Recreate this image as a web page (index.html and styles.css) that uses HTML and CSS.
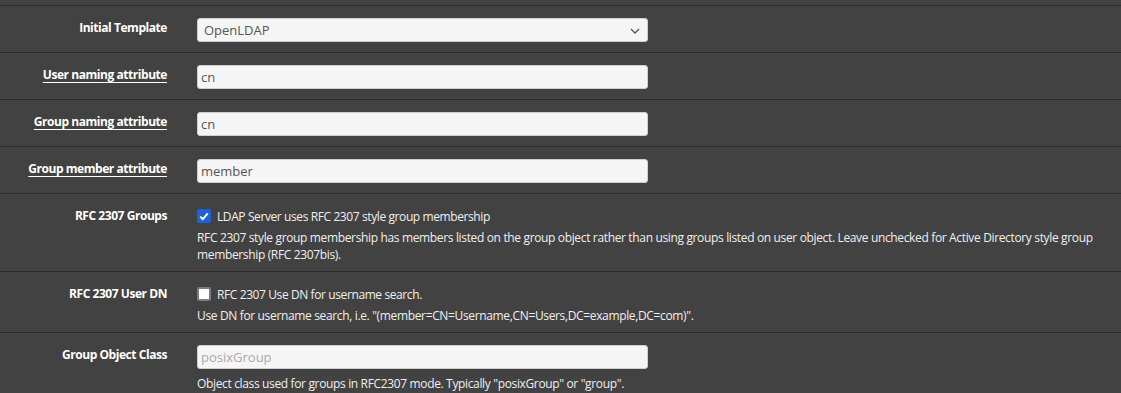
FILE: index.html
```html
<!DOCTYPE html>
<html lang="en">
<head>
    <meta charset="UTF-8">
    <meta name="viewport" content="width=device-width, initial-scale=1.0">
    <title>LDAP Server Settings</title>
    <link rel="stylesheet" href="styles.css">
</head>
<body>
    <div class="panel">
        <div class="top-strip"></div>

        <div class="form-row">
            <div class="form-label">Initial Template</div>
            <div class="form-field">
                <div class="select-wrap">
                    <select class="form-input">
                        <option>OpenLDAP</option>
                        <option>Microsoft AD</option>
                        <option>Novell eDirectory</option>
                    </select>
                    <svg class="chevron" width="10" height="6" viewBox="0 0 10 6">
                        <path d="M1 1 L5 5 L9 1" fill="none" stroke="#555" stroke-width="1.3"/>
                    </svg>
                </div>
            </div>
        </div>

        <div class="form-row">
            <div class="form-label"><span class="tip">User naming attribute</span></div>
            <div class="form-field">
                <input class="form-input" type="text" value="cn">
            </div>
        </div>

        <div class="form-row">
            <div class="form-label"><span class="tip">Group naming attribute</span></div>
            <div class="form-field">
                <input class="form-input" type="text" value="cn">
            </div>
        </div>

        <div class="form-row">
            <div class="form-label"><span class="tip">Group member attribute</span></div>
            <div class="form-field">
                <input class="form-input" type="text" value="member">
            </div>
        </div>

        <div class="form-row with-help">
            <div class="form-label">RFC 2307 Groups</div>
            <div class="form-field">
                <label class="check-line">
                    <span class="box checked">
                        <svg width="10" height="9" viewBox="0 0 10 9">
                            <path d="M1.2 4.6 L3.8 7.2 L8.8 1.4" fill="none" stroke="#fff" stroke-width="1.9"/>
                        </svg>
                    </span>
                    LDAP Server uses RFC 2307 style group membership
                </label>
                <p class="help">RFC 2307 style group membership has members listed on the group object rather than using groups listed on user object. Leave unchecked for Active Directory style group membership (RFC 2307bis).</p>
            </div>
        </div>

        <div class="form-row with-help">
            <div class="form-label">RFC 2307 User DN</div>
            <div class="form-field">
                <label class="check-line">
                    <span class="box"></span>
                    RFC 2307 Use DN for username search.
                </label>
                <p class="help">Use DN for username search, i.e. "(member=CN=Username,CN=Users,DC=example,DC=com)".</p>
            </div>
        </div>

        <div class="form-row with-help">
            <div class="form-label">Group Object Class</div>
            <div class="form-field">
                <input class="form-input" type="text" placeholder="posixGroup">
                <p class="help after-input">Object class used for groups in RFC2307 mode. Typically "posixGroup" or "group".</p>
            </div>
        </div>
    </div>
</body>
</html>
```

FILE: styles.css
```css
body {
    margin: 0;
    background-color: #424242;
    font-family: "Open Sans", "Noto Sans", sans-serif;
    font-size: 12px;
    color: #f0f0f0;
}

.panel {
    background: #424242;
}

.top-strip {
    height: 5px;
}

.form-row {
    display: flex;
    border-top: 1px solid #2b2b2b;
    padding: 12px 20px 10px 0;
}

.form-row.with-help {
    padding-bottom: 8px;
}

.form-label {
    width: 167px;
    flex-shrink: 0;
    padding-top: 1px;
    text-align: right;
    font-weight: bold;
    line-height: 17px;
    color: #fff;
    letter-spacing: -0.45px;
}

.tip {
    text-decoration: underline;
    text-underline-offset: 3px;
}

.form-field {
    flex: 1;
    padding-left: 30px;
}

.form-input {
    display: block;
    width: 451px;
    height: 24px;
    box-sizing: border-box;
    margin: 0;
    padding: 0 3px;
    border: 1px solid #cfcfcf;
    border-radius: 3px;
    background: #f5f5f5;
    font-family: inherit;
    font-size: 13px;
    color: #555;
}

.form-input::placeholder {
    color: #aaa;
}

.select-wrap {
    position: relative;
    width: 451px;
}

select.form-input {
    appearance: none;
    -webkit-appearance: none;
    padding-left: 6px;
}

.chevron {
    position: absolute;
    right: 8px;
    top: 10px;
}

.check-line {
    display: flex;
    align-items: center;
    height: 20px;
    gap: 6px;
    color: #f0f0f0;
    letter-spacing: -0.4px;
}

.box {
    display: inline-flex;
    align-items: center;
    justify-content: center;
    width: 14px;
    height: 14px;
    box-sizing: border-box;
    border: 2px solid #7d7b86;
    border-radius: 2px;
    background: #fff;
}

.box.checked {
    border: none;
    background: #1d63d6;
}

.help {
    margin: 3px 0 0;
    line-height: 17px;
    color: #f0f0f0;
    letter-spacing: -0.35px;
}

.help.after-input {
    margin-top: 6px;
}
```
